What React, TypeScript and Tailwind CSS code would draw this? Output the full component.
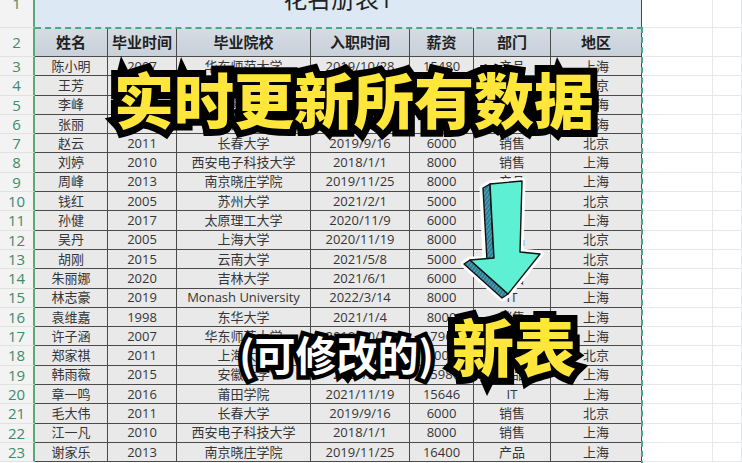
import React from "react";

type Row = [string, string, string, string, string, string, string];

const rows: Row[] = [
  ["陈小明", "2007", "华东师范大学", "2019/10/28", "15480", "产品", "上海"],
  ["王芳", "2010", "西安电子科技大学", "2018/1/1", "8000", "销售", "北京"],
  ["李峰", "2013", "南京晓庄学院", "2019/11/25", "8000", "产品", "上海"],
  ["张丽", "2005", "苏州大学", "2021/2/1", "5000", "IT", "上海"],
  ["赵云", "2011", "长春大学", "2019/9/16", "6000", "销售", "北京"],
  ["刘婷", "2010", "西安电子科技大学", "2018/1/1", "8000", "销售", "上海"],
  ["周峰", "2013", "南京晓庄学院", "2019/11/25", "8000", "产品", "上海"],
  ["钱红", "2005", "苏州大学", "2021/2/1", "5000", "IT", "北京"],
  ["孙健", "2017", "太原理工大学", "2020/11/9", "6000", "销售", "上海"],
  ["吴丹", "2005", "上海大学", "2020/11/19", "8000", "产品", "北京"],
  ["胡刚", "2015", "云南大学", "2021/5/8", "5000", "IT", "北京"],
  ["朱丽娜", "2020", "吉林大学", "2021/6/1", "6000", "销售", "上海"],
  ["林志豪", "2019", "Monash University", "2022/3/14", "8000", "IT", "上海"],
  ["袁维嘉", "1998", "东华大学", "2021/1/4", "8000", "销售", "上海"],
  ["许子涵", "2007", "华东师范大学", "2019/10/28", "17960", "产品", "上海"],
  ["郑家祺", "2011", "上海大学", "2020/11/19", "8000", "销售", "北京"],
  ["韩雨薇", "2015", "安徽大学", "2021/5/8", "15980", "产品", "上海"],
  ["章一鸣", "2016", "莆田学院", "2021/11/19", "15646", "IT", "上海"],
  ["毛大伟", "2011", "长春大学", "2019/9/16", "6000", "销售", "北京"],
  ["江一凡", "2010", "西安电子科技大学", "2018/1/1", "8000", "销售", "上海"],
  ["谢家乐", "2013", "南京晓庄学院", "2019/11/25", "16400", "产品", "上海"],
];

const headers = ["姓名", "毕业时间", "毕业院校", "入职时间", "薪资", "部门", "地区"];

const rowNum =
  "bg-[#f2f3f2] border-b border-[#dfe2df] border-r-2 border-r-[#5aa877] flex items-center justify-center text-[15px] text-[#3d8c6b]";
const blank = "bg-white border-b border-r border-[#e6e8ea]";

const Arrow: React.FC = () => (
  <svg
    className="absolute left-[460px] top-[170px]"
    width="100"
    height="140"
    viewBox="0 0 100 140"
  >
    <defs>
      <pattern id="hatch" width="3" height="3" patternUnits="userSpaceOnUse" patternTransform="rotate(35)">
        <rect width="3" height="3" fill="#2c7c95" />
        <line x1="0" y1="0" x2="0" y2="3" stroke="#7fd3de" strokeWidth="1" />
      </pattern>
    </defs>
    <g stroke="#ffffff" strokeWidth="7" strokeLinejoin="round" fill="#ffffff">
      <polygon points="30,14 23,18 26,90 10,90 4,94 42,128 48,124 80,84 60,82 62,11" />
    </g>
    <g stroke="#111" strokeWidth="1.4" strokeLinejoin="round">
      <polygon points="30,14 23,18 27,91 34,88" fill="url(#hatch)" />
      <polygon points="10,90 4,94 42,128 48,124" fill="url(#hatch)" />
      <polygon points="30,14 62,11 60,82 80,84 48,124 10,90 34,88" fill="#5ef0d3" />
    </g>
  </svg>
);

const Spikes: React.FC = () => (
  <svg className="absolute left-0 top-0 pointer-events-none" width="742" height="463">
    <g fill="#000">
      <polygon points="116,76 121,56 131,76" />
      <polygon points="176,76 181,57 190,76" />
      <polygon points="551,76 557,57 567,76" />
      <polygon points="480,380 487,396 495,380" />
      <polygon points="338,372 348,384 356,372" />
    </g>
  </svg>
);

export default function App() {
  return (
    <div
      className="relative w-[742px] h-[463px] overflow-hidden bg-white"
      style={{ fontFamily: '"Open Sans", "Noto Sans CJK SC", sans-serif' }}
    >
      <div className="grid grid-cols-[35px_73px_69px_134px_99px_64px_77px_91px_71px_29px] grid-rows-[28px_29px_repeat(21,19.3px)]">
        {/* row 1 */}
        <div className={rowNum + " items-start"}>
          <span className="-mt-[8px]">1</span>
        </div>
        <div className="col-span-7 bg-[#dce8f3] border-r border-[#4a4a4a] overflow-hidden flex justify-center">
          <span className="-mt-[13px] text-[24px] leading-none text-[#222]">花名册表1</span>
        </div>
        <div className={blank} />
        <div className={blank} />

        {/* row 2 */}
        <div className={rowNum}>2</div>
        {headers.map((h, i) => (
          <div
            key={i}
            className="bg-gradient-to-b from-[#d6dce3] to-[#c8d0da] border-r border-b border-[#4a4a4a] flex items-center justify-center text-[15px] font-bold text-[#1f1f1f]"
          >
            {h}
          </div>
        ))}
        <div className={blank} />
        <div className={blank} />

        {rows.map((r, i) => (
          <React.Fragment key={i}>
            <div className={rowNum}>{i + 3}</div>
            {r.map((c, j) => (
              <div
                key={j}
                className="bg-[#e9e9ea] border-r border-b border-[#4a4a4a] flex items-center justify-center text-[13px] text-[#353535] leading-none whitespace-nowrap"
              >
                {c}
              </div>
            ))}
            <div className={blank} />
            <div className={blank} />
          </React.Fragment>
        ))}
      </div>

      {/* copy marquee */}
      <div className="absolute left-[35px] top-[27px] w-[608px] h-[460px] border-t-2 border-r-2 border-dashed border-[#4aa888] pointer-events-none" />

      <Arrow />
      <Spikes />

      {/* overlay captions */}
      <div
        className="absolute left-[114px] top-[68px] text-[60px] leading-none font-black whitespace-nowrap"
        style={{ fontFamily: '"Noto Sans CJK SC", sans-serif' }}
      >
        <span className="relative inline-block">
          <span className="text-black [-webkit-text-stroke:14px_#000]">实时更新所有数据</span>
          <span className="absolute left-0 top-0 text-[#ffe63a]">实时更新所有数据</span>
        </span>
      </div>

      <div
        className="absolute left-[239px] top-[333px] text-[41px] leading-none font-bold whitespace-nowrap"
        style={{ fontFamily: '"Noto Sans CJK SC", sans-serif' }}
      >
        <span className="relative inline-block">
          <span className="text-black [-webkit-text-stroke:9px_#000]">(可修改的)</span>
          <span className="absolute left-0 top-0 text-white">(可修改的)</span>
        </span>
      </div>

      <div
        className="absolute left-[452px] top-[314px] text-[62px] leading-none font-black whitespace-nowrap"
        style={{ fontFamily: '"Noto Sans CJK SC", sans-serif' }}
      >
        <span className="relative inline-block">
          <span className="text-black [-webkit-text-stroke:14px_#000]">新表</span>
          <span className="absolute left-0 top-0 text-[#ffe63a]">新表</span>
        </span>
      </div>
    </div>
  );
}
